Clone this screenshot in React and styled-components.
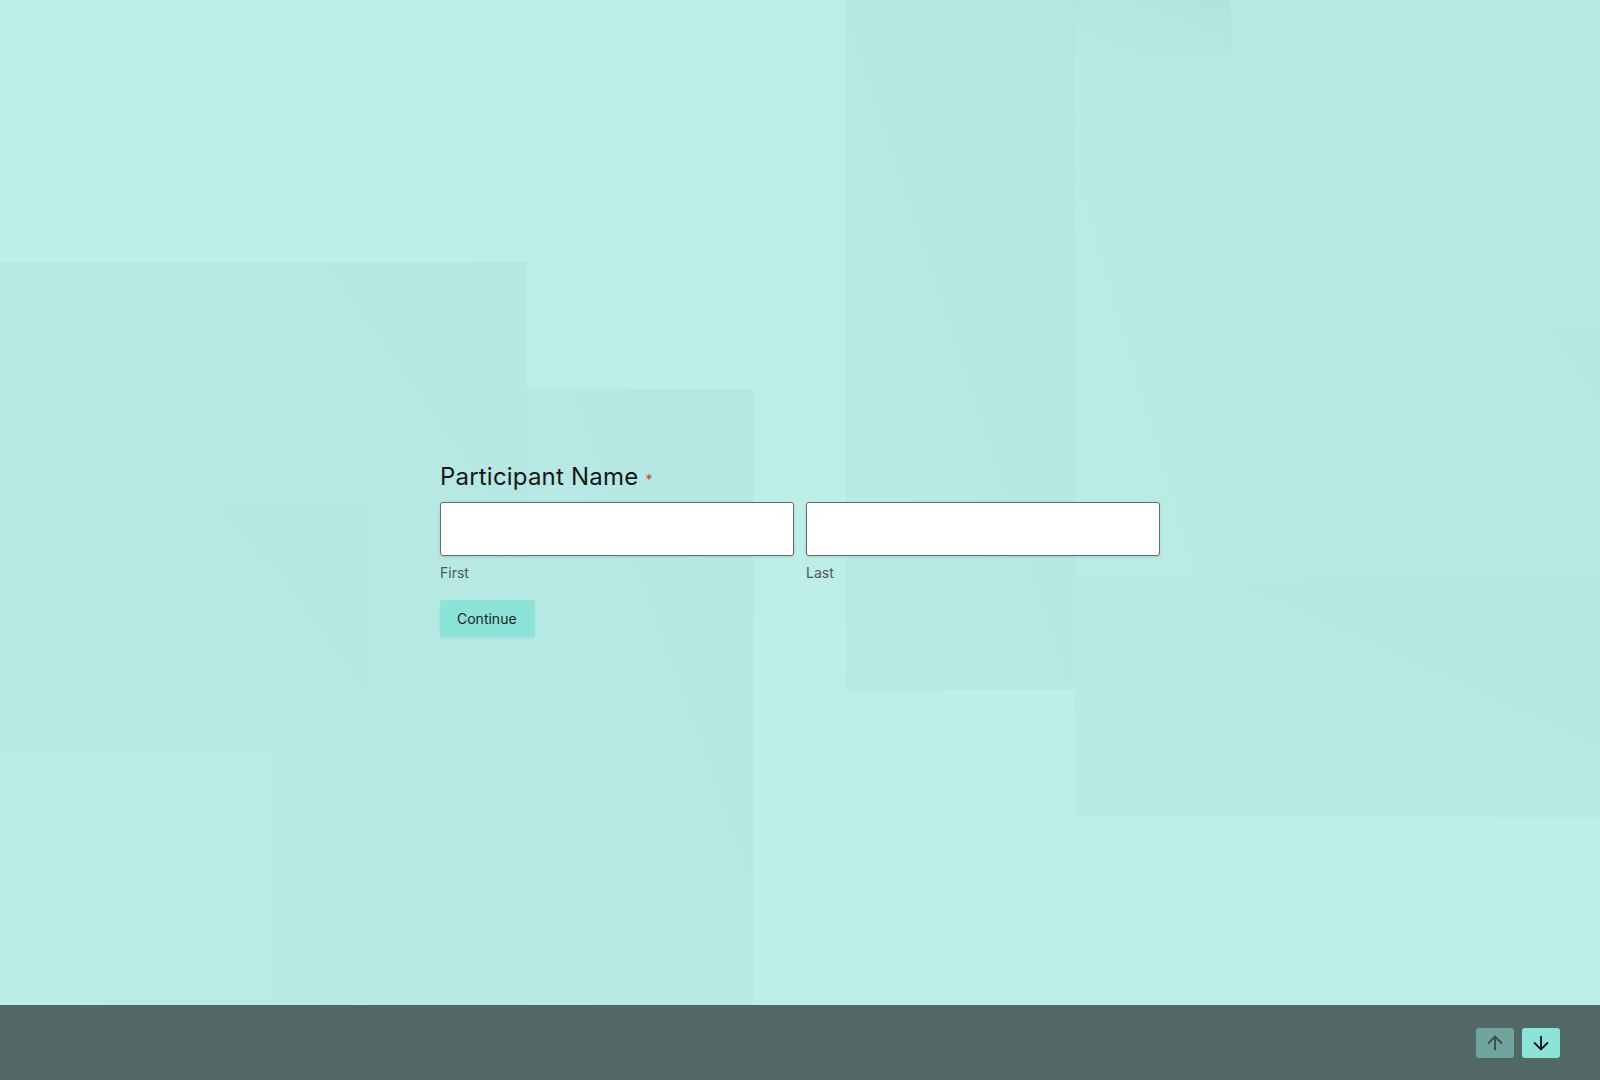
import React from 'react';
import styled, { createGlobalStyle } from 'styled-components';
import { ArrowUp, ArrowDown } from 'lucide-react';

const GlobalStyle = createGlobalStyle`
    html, body {
        margin: 0;
        padding: 0;
        height: 100%;
    }
    body {
        font-family: Inter, "Noto Sans", "Liberation Sans", sans-serif;
        background: #bdeee8;
        color: #1c1f1f;
    }
`

const Page = styled.div`
    position: relative;
    width: 100%;
    height: 1080px;
    display: flex;
    flex-direction: column;
    overflow: hidden;
`

const Backdrop = styled.svg`
    position: absolute;
    top: 0;
    left: 0;
    width: 100%;
    height: 1005px;
    z-index: 0;
`

const Main = styled.main`
    position: relative;
    z-index: 1;
    flex: 1;
    display: flex;
    justify-content: center;
    padding-top: 462px;
`

const Form = styled.form`
    width: 720px;
    display: flex;
    flex-direction: column;
`

const Title = styled.h2`
    margin: 0 0 11px;
    font-size: 24px;
    line-height: 29px;
    font-weight: 400;
    letter-spacing: 0.2px;
    color: #161818;
    display: flex;
    align-items: baseline;
    gap: 7px;
`

const Required = styled.span`
    color: #d0392b;
    font-size: 14px;
    line-height: 1;
`

const Fields = styled.div`
    display: grid;
    grid-template-columns: 1fr 1fr;
    gap: 12px;
`

const Field = styled.label`
    display: flex;
    flex-direction: column;
    gap: 7px;
`

const Input = styled.input`
    box-sizing: border-box;
    width: 100%;
    height: 54px;
    border: 1px solid #656b6b;
    border-radius: 3px;
    background: #fff;
    box-shadow: 0 1px 3px rgba(0, 0, 0, 0.12);
    font: inherit;
    font-size: 18px;
    padding: 0 14px;
    outline: none;
`

const SubLabel = styled.span`
    font-size: 14px;
    line-height: 20px;
    color: #4f5655;
`

const ContinueButton = styled.button`
    align-self: flex-start;
    margin-top: 17px;
    height: 37px;
    padding: 0 18px 1px 17px;
    border: none;
    border-radius: 3px;
    background: #8ce4d8;
    color: #1b1d1d;
    font-family: inherit;
    font-size: 14px;
    box-shadow: 0 1px 2px rgba(0, 0, 0, 0.08);
    cursor: pointer;
`

const Footer = styled.footer`
    position: relative;
    z-index: 1;
    height: 75px;
    background: #526864;
    display: flex;
    justify-content: flex-end;
    align-items: flex-start;
    gap: 8px;
    padding: 23px 40px 0 0;
    box-sizing: border-box;
`

const NavButton = styled.button`
    width: 38px;
    height: 30px;
    border: none;
    border-radius: 3px;
    padding: 0;
    display: flex;
    align-items: center;
    justify-content: center;
    background: ${p => p.$active ? '#8ce4d8' : '#6fa59e'};
    color: ${p => p.$active ? '#111' : '#3a4a48'};
    cursor: pointer;
`

const blocks = [
    { x: 0, y: 262, w: 527, h: 743, o: 0.42 },
    { x: 0, y: 502, w: 369, h: 251, o: 0.12 },
    { x: 527, y: 389, w: 226, h: 616, o: 0.5 },
    { x: 846, y: 0, w: 229, h: 690, o: 0.55 },
    { x: 1075, y: 0, w: 156, h: 57, o: 0.7 },
    { x: 1075, y: 57, w: 156, h: 520, o: 0.3 },
    { x: 1231, y: 0, w: 369, h: 577, o: 0.48 },
    { x: 1075, y: 577, w: 525, h: 240, o: 0.48 },
]

function Background() {
    return <Backdrop viewBox="0 0 1600 1005" preserveAspectRatio="none">
        <defs>
            <linearGradient id="shade" x1="0" y1="1" x2="1" y2="0">
                <stop offset="0" stopColor="#a8e0d9" stopOpacity="0.4" />
                <stop offset="1" stopColor="#a3dbd4" stopOpacity="0.75" />
            </linearGradient>
        </defs>
        <rect x="0" y="0" width="1600" height="1005" fill="#bdeee8" />
        {blocks.map((b, i) =>
            <rect key={i} x={b.x} y={b.y} width={b.w} height={b.h} fill="url(#shade)" opacity={b.o} />
        )}
        <rect x="1324" y="0" width="276" height="326" fill="#bdeee8" opacity="0.25" />
        <rect x="0" y="753" width="276" height="252" fill="#bdeee8" opacity="0.35" />
    </Backdrop>
}

export default function App() {
    return <>
        <GlobalStyle />
        <Page>
            <Background />
            <Main>
                <Form onSubmit={e => e.preventDefault()}>
                    <Title>Participant Name <Required>*</Required></Title>
                    <Fields>
                        <Field>
                            <Input type="text" name="first" />
                            <SubLabel>First</SubLabel>
                        </Field>
                        <Field>
                            <Input type="text" name="last" />
                            <SubLabel>Last</SubLabel>
                        </Field>
                    </Fields>
                    <ContinueButton type="submit">Continue</ContinueButton>
                </Form>
            </Main>
            <Footer>
                <NavButton aria-label="Previous"><ArrowUp size={22} strokeWidth={2} /></NavButton>
                <NavButton $active aria-label="Next"><ArrowDown size={22} strokeWidth={2} /></NavButton>
            </Footer>
        </Page>
    </>
}
